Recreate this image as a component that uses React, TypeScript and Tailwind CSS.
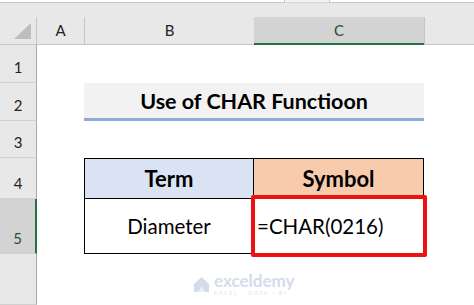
import React from 'react'

const font = { fontFamily: 'Lato, "Open Sans", Arial, sans-serif' }

const App = () => {
  const rows = [
    { n: '1', h: 'h-[38px]' },
    { n: '2', h: 'h-[38px]' },
    { n: '3', h: 'h-[37px]' },
    { n: '4', h: 'h-[41px]' },
    { n: '5', h: 'h-[55px]', active: true },
    { n: '6', h: 'h-[51px]' },
  ]

  return (
    <div className="w-[474px] h-[305px] overflow-hidden bg-white text-[#222]" style={font}>
      {/* formula bar edge */}
      <div className="flex h-[3px] bg-[#e8e8e8]">
        <div className="w-[285px] bg-white border-b border-r border-[#c6c6c6]"></div>
        <div className="w-[44px] bg-[#f3f3f3] border-b border-[#d6d6d6]"></div>
        <div className="flex-1 bg-white border-b border-l border-[#c6c6c6]"></div>
      </div>
      <div className="h-[14px] bg-[#e8e8e8]"></div>

      {/* Column headers */}
      <div className="flex h-[28px] bg-[#e8e8e8] text-[15px]">
        <div className="w-[37px] flex items-end justify-end pr-[5px] pb-[5px] border-r border-[#b8b8b8] border-b border-[#c6c6c6]">
          <svg width="17" height="16" viewBox="0 0 17 16">
            <polygon points="0,16 17,0 17,16" fill="#bdbdbd" />
          </svg>
        </div>
        <div className="w-[48px] flex items-center justify-center border-r border-b border-[#c6c6c6]">A</div>
        <div className="w-[169px] flex items-center justify-center border-b border-[#c6c6c6]">B</div>
        <div className="w-[170px] flex items-center justify-center bg-[#d3d3d3] text-[#2c4a3a] border-b-[2px] border-[#217346]">C</div>
        <div className="flex-1 border-l border-b border-[#c6c6c6]"></div>
      </div>

      <div className="flex">
        {/* Row headers */}
        <div className="w-[37px] flex flex-col text-[15px]">
          {rows.map((r) => (
            <div
              key={r.n}
              className={`${r.h} flex items-end justify-center pb-[4px] border-b border-[#d0d0d0] ${
                r.active
                  ? 'bg-[#d3d3d3] text-[#2c4a3a] border-r-[2px] border-r-[#217346]'
                  : 'bg-[#e8e8e8] border-r border-r-[#a8a8a8]'
              }`}
            >
              {r.n !== '6' && r.n}
            </div>
          ))}
        </div>

        {/* Sheet body */}
        <div className="flex-1 flex flex-col">
          <div className="h-[38px]"></div>

          {/* Title */}
          <div className="h-[38px] flex">
            <div className="w-[47px]"></div>
            <div className="w-[340px] bg-[#f2f2f2] border-b-[3px] border-[#8ea9db] flex items-center justify-center text-[21.5px] font-bold text-black pt-[2px]">
              Use of CHAR Functioon
            </div>
          </div>

          <div className="h-[37px]"></div>

          {/* Table */}
          <div className="flex ml-[47px]">
            <div className="w-[170px] flex flex-col">
              <div className="h-[41px] bg-[#dae3f3] border border-black flex items-center justify-center text-[22px] font-bold text-black">
                Term
              </div>
              <div className="h-[55px] border-x border-b border-black flex items-center justify-center text-[20.5px] text-black">
                Diameter
              </div>
            </div>
            <div className="w-[170px] flex flex-col">
              <div className="h-[41px] bg-[#f8cbad] border-y border-r border-black flex items-center justify-center text-[22px] font-bold text-black">
                Symbol
              </div>
              <div className="relative h-[55px] flex items-center pl-[3px] text-[20.5px] text-black">
                =CHAR(0216)
                <div className="absolute -left-[3px] -right-[3px] -top-[4px] -bottom-[3px] border-[4px] border-[#ee1111] rounded-[2px]"></div>
              </div>
            </div>
          </div>

          {/* Watermark */}
          <div className="flex items-center gap-[4px] ml-[156px] mt-[18px] opacity-60">
            <svg width="17" height="17" viewBox="0 0 17 17">
              <path d="M1 8 L8.5 1 L16 8 L16 16 L1 16 Z" fill="#b9c6dc" />
              <path d="M5 16 L8.5 10 L12 16 Z" fill="#dfe6f0" />
            </svg>
            <div className="flex flex-col">
              <span className="text-[17px] leading-[17px] font-bold text-[#b9c6dc]">exceldemy</span>
              <span className="text-[5px] leading-[6px] tracking-[2px] text-[#c6cfdd] mt-[1px]">EXCEL · DATA · BI</span>
            </div>
          </div>
        </div>
      </div>
    </div>
  )
}

export default App
